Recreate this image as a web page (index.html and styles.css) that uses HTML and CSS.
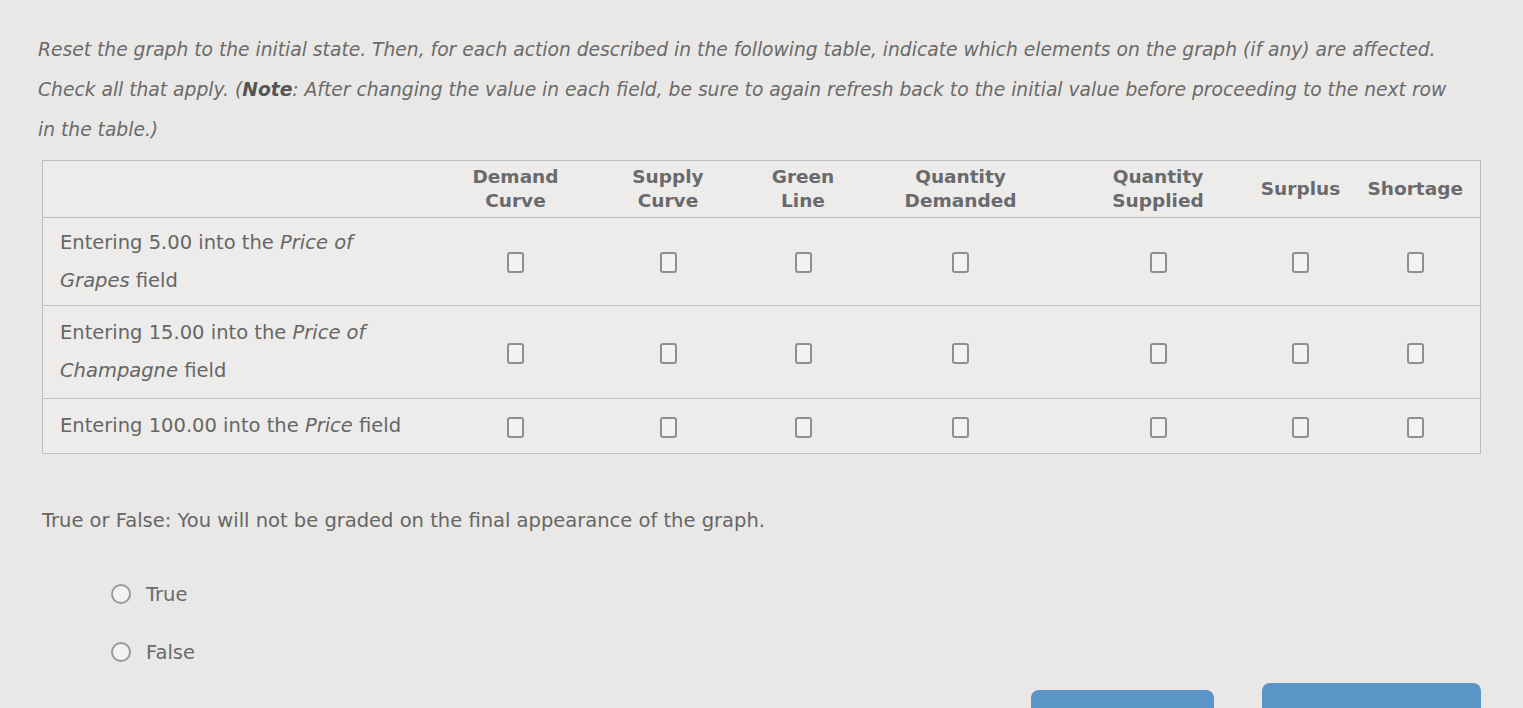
FILE: index.html
```html
<!DOCTYPE html>
<html>
<head>
<meta charset="utf-8">
<link rel="stylesheet" href="styles.css">
</head>
<body>
<div class="page">
  <p class="intro">Reset the graph to the initial state. Then, for each action described in the following table, indicate which elements on the graph (if any) are affected. Check all that apply. (<b>Note</b>: After changing the value in each field, be sure to again refresh back to the initial value before proceeding to the next row in the table.)</p>

  <table class="grid">
    <colgroup>
      <col class="c-label"><col class="c1"><col class="c2"><col class="c3"><col class="c4"><col class="c5"><col class="c6"><col class="c7">
    </colgroup>
    <thead>
      <tr>
        <th></th>
        <th>Demand<br>Curve</th>
        <th>Supply<br>Curve</th>
        <th>Green<br>Line</th>
        <th>Quantity<br>Demanded</th>
        <th>Quantity<br>Supplied</th>
        <th>Surplus</th>
        <th>Shortage</th>
      </tr>
    </thead>
    <tbody>
      <tr class="r1">
        <td class="label">Entering 5.00 into the <i>Price of<br>Grapes</i> field</td>
        <td><span class="box"></span></td><td><span class="box"></span></td><td><span class="box"></span></td><td><span class="box"></span></td><td><span class="box"></span></td><td><span class="box"></span></td><td><span class="box"></span></td>
      </tr>
      <tr class="r2">
        <td class="label">Entering 15.00 into the <i>Price of<br>Champagne</i> field</td>
        <td><span class="box"></span></td><td><span class="box"></span></td><td><span class="box"></span></td><td><span class="box"></span></td><td><span class="box"></span></td><td><span class="box"></span></td><td><span class="box"></span></td>
      </tr>
      <tr class="r3">
        <td class="label">Entering 100.00 into the <i>Price</i> field</td>
        <td><span class="box"></span></td><td><span class="box"></span></td><td><span class="box"></span></td><td><span class="box"></span></td><td><span class="box"></span></td><td><span class="box"></span></td><td><span class="box"></span></td>
      </tr>
    </tbody>
  </table>

  <p class="question">True or False: You will not be graded on the final appearance of the graph.</p>

  <div class="options">
    <label class="opt"><span class="radio"></span>True</label>
    <label class="opt"><span class="radio"></span>False</label>
  </div>

  <div class="actions">
    <span class="btn btn-a"></span>
    <span class="btn btn-b"></span>
  </div>
</div>
</body>
</html>
```

FILE: styles.css
```css
html, body {
  margin: 0;
  padding: 0;
  background: #e9e8e6;
  height: 100%;
  overflow: hidden;
}
.page {
  font-family: "DejaVu Sans", Verdana, sans-serif;
  color: #6a6a6a;
  padding: 30px 0 0 38px;
  width: 1450px;
  position: relative;
  height: 678px;
}
.intro {
  margin: 0;
  font-style: italic;
  font-size: 18.7px;
  line-height: 40px;
  width: 1425px;
}
.intro b {
  font-weight: bold;
  color: #555;
}
.grid {
  margin: 10px 0 0 4px;
  border-collapse: collapse;
  table-layout: fixed;
  width: 1438px;
  background: #edecea;
  border: 1.5px solid #bcbcbc;
  font-size: 19.5px;
}
.c-label { width: 403px; }
.c1 { width: 140px; }
.c2 { width: 165px; }
.c3 { width: 105px; }
.c4 { width: 210px; }
.c5 { width: 185px; }
.c6 { width: 100px; }
.c7 { width: 130px; }
.grid th {
  font-weight: bold;
  font-size: 18.5px;
  color: #686a6e;
  line-height: 24px;
  height: 56px;
  padding: 0;
  text-align: center;
  vertical-align: middle;
  border-bottom: 1.5px solid #bcbcbc;
}
.grid td {
  text-align: center;
  vertical-align: middle;
  padding: 0;
  border-bottom: 1.5px solid #c2c2c2;
}
.grid td.label {
  text-align: left;
  padding-left: 17px;
  line-height: 38px;
  color: #666;
}
.r1 td { height: 87px; }
.r2 td { height: 92px; }
.r3 td { height: 54px; }
.box {
  display: inline-block;
  width: 13px;
  height: 17px;
  border: 2px solid #8f8f8f;
  border-radius: 3px;
  background: #f2f2f0;
  vertical-align: middle;
}
.question {
  margin: 54px 0 0 4px;
  font-size: 19.5px;
  line-height: 26px;
  color: #666;
}
.options {
  display: flex;
  flex-direction: column;
  gap: 34px;
  margin: 48px 0 0 73px;
}
.opt {
  display: flex;
  align-items: center;
  gap: 15px;
  font-size: 19.5px;
  color: #6a6a6a;
  height: 24px;
}
.radio {
  width: 16px;
  height: 16px;
  border: 2px solid #9a9a9a;
  border-radius: 50%;
  background: #f2f2f0;
}
.actions {
  position: absolute;
  left: 1031px;
  top: 683px;
  display: flex;
  gap: 48px;
  align-items: flex-start;
}
.btn {
  display: block;
  height: 40px;
  background: #5b95c8;
  border-radius: 8px 8px 0 0;
}
.btn-a { width: 183px; margin-top: 7px; }
.btn-b { width: 219px; }
```
